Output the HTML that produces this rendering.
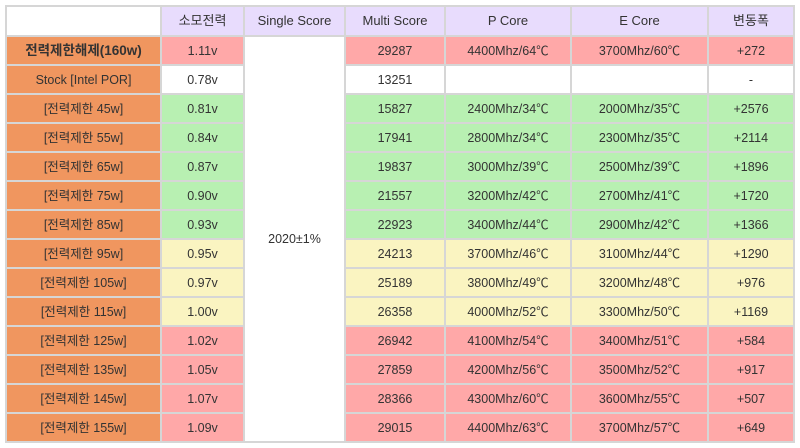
<!DOCTYPE html>
<html><head><meta charset="utf-8"><style>
html,body{margin:0;padding:0;background:#fff;width:800px;height:448px;overflow:hidden}
table{position:absolute;left:5px;top:5px;border-collapse:collapse;table-layout:fixed;font-family:"Liberation Sans","Noto Sans CJK KR",sans-serif;font-size:12.5px;color:#333}
td{border:2px solid #d6d6d6;text-align:center;padding:0;height:27px;white-space:nowrap;line-height:14px;vertical-align:middle}
tr.h td{height:28px;background:#e8dcfd;font-size:13px}
tr.h td.e{background:#fff}
td.o{background:#f0965f}
.r td.c{background:#ffa8a8}
.g td.c{background:#b8f0b2}
.y td.c{background:#faf4c1}
.w td.c{background:#fff}
td.s{background:#fff}
</style></head><body>
<table>
<colgroup><col style="width:155px"><col style="width:83px"><col style="width:101px"><col style="width:100px"><col style="width:126px"><col style="width:137px"><col style="width:86px"></colgroup>
<tr class="h"><td class="e"></td><td>소모전력</td><td>Single Score</td><td>Multi Score</td><td>P Core</td><td>E Core</td><td>변동폭</td></tr>
<tr class="r"><td class="o"><b style="font-size:13.5px">전력제한해제(160w)</b></td><td class="c">1.11v</td><td class="s" rowspan="14">2020±1%</td><td class="c">29287</td><td class="c">4400Mhz/64℃</td><td class="c">3700Mhz/60℃</td><td class="c">+272</td></tr>
<tr class="w"><td class="o">Stock [Intel POR]</td><td class="c">0.78v</td><td class="c">13251</td><td class="c"></td><td class="c"></td><td class="c">-</td></tr>
<tr class="g"><td class="o">[전력제한 45w]</td><td class="c">0.81v</td><td class="c">15827</td><td class="c">2400Mhz/34℃</td><td class="c">2000Mhz/35℃</td><td class="c">+2576</td></tr>
<tr class="g"><td class="o">[전력제한 55w]</td><td class="c">0.84v</td><td class="c">17941</td><td class="c">2800Mhz/34℃</td><td class="c">2300Mhz/35℃</td><td class="c">+2114</td></tr>
<tr class="g"><td class="o">[전력제한 65w]</td><td class="c">0.87v</td><td class="c">19837</td><td class="c">3000Mhz/39℃</td><td class="c">2500Mhz/39℃</td><td class="c">+1896</td></tr>
<tr class="g"><td class="o">[전력제한 75w]</td><td class="c">0.90v</td><td class="c">21557</td><td class="c">3200Mhz/42℃</td><td class="c">2700Mhz/41℃</td><td class="c">+1720</td></tr>
<tr class="g"><td class="o">[전력제한 85w]</td><td class="c">0.93v</td><td class="c">22923</td><td class="c">3400Mhz/44℃</td><td class="c">2900Mhz/42℃</td><td class="c">+1366</td></tr>
<tr class="y"><td class="o">[전력제한 95w]</td><td class="c">0.95v</td><td class="c">24213</td><td class="c">3700Mhz/46℃</td><td class="c">3100Mhz/44℃</td><td class="c">+1290</td></tr>
<tr class="y"><td class="o">[전력제한 105w]</td><td class="c">0.97v</td><td class="c">25189</td><td class="c">3800Mhz/49℃</td><td class="c">3200Mhz/48℃</td><td class="c">+976</td></tr>
<tr class="y"><td class="o">[전력제한 115w]</td><td class="c">1.00v</td><td class="c">26358</td><td class="c">4000Mhz/52℃</td><td class="c">3300Mhz/50℃</td><td class="c">+1169</td></tr>
<tr class="r"><td class="o">[전력제한 125w]</td><td class="c">1.02v</td><td class="c">26942</td><td class="c">4100Mhz/54℃</td><td class="c">3400Mhz/51℃</td><td class="c">+584</td></tr>
<tr class="r"><td class="o">[전력제한 135w]</td><td class="c">1.05v</td><td class="c">27859</td><td class="c">4200Mhz/56℃</td><td class="c">3500Mhz/52℃</td><td class="c">+917</td></tr>
<tr class="r"><td class="o">[전력제한 145w]</td><td class="c">1.07v</td><td class="c">28366</td><td class="c">4300Mhz/60℃</td><td class="c">3600Mhz/55℃</td><td class="c">+507</td></tr>
<tr class="r"><td class="o">[전력제한 155w]</td><td class="c">1.09v</td><td class="c">29015</td><td class="c">4400Mhz/63℃</td><td class="c">3700Mhz/57℃</td><td class="c">+649</td></tr>
</table>
</body></html>
